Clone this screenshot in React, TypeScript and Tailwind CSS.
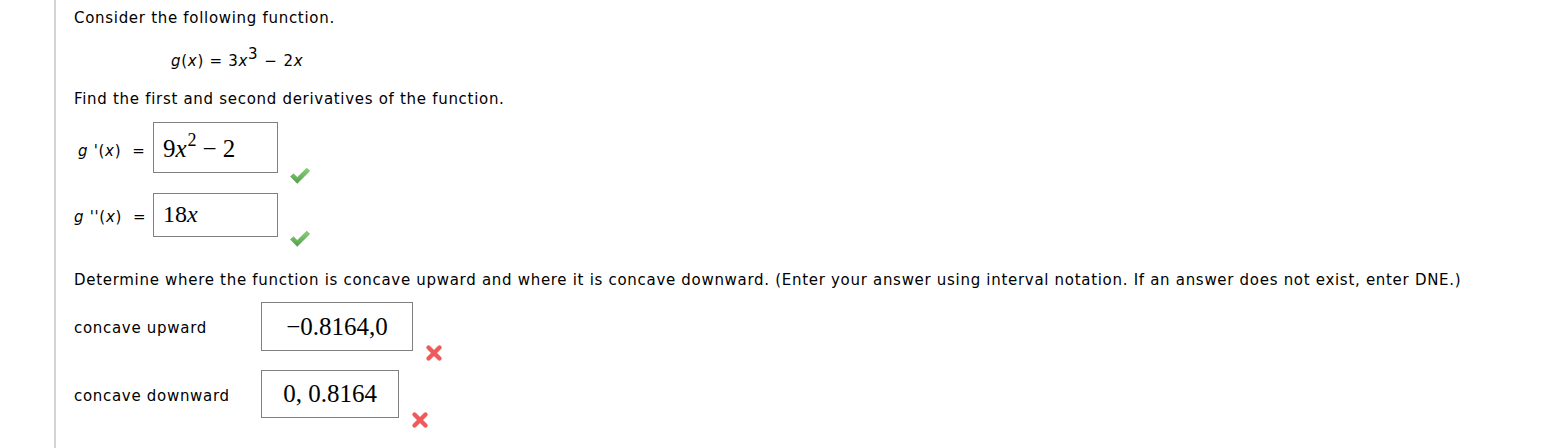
import React from "react";

const sans = { fontFamily: '"DejaVu Sans", Verdana, sans-serif' };
const serif = { fontFamily: '"Liberation Serif", "DejaVu Serif", serif' };

function Check() {
  return (
    <svg width="22" height="18" viewBox="0 0 22 18">
      <defs>
        <linearGradient id="cg" x1="0" y1="0" x2="0" y2="1">
          <stop offset="0" stopColor="#8fd07f" />
          <stop offset="1" stopColor="#4e9f45" />
        </linearGradient>
      </defs>
      <path
        d="M1.5 9.5 L4.5 6.8 L8.2 10.4 L17.8 1.2 L20.6 4 L8.2 16.4 Z"
        fill="url(#cg)"
        stroke="#5aa94f"
        strokeWidth="0.6"
        strokeLinejoin="round"
      />
    </svg>
  );
}

function Cross() {
  return (
    <svg width="18" height="18" viewBox="0 0 18 18">
      <path d="M3.5 3.5 L14.5 14.5 M14.5 3.5 L3.5 14.5" stroke="#ef5b5b" strokeWidth="4.4" strokeLinecap="round" />
    </svg>
  );
}

export default function App() {
  return (
    <div className="w-[1557px] h-[448px] bg-white overflow-hidden text-[15px] tracking-[0.7px] text-black" style={sans}>
      <div className="ml-[54px] h-full border-l-2 border-[#d4d4d4] pl-[18px] pt-[8px]">
        <p className="h-[20px] leading-[20px]">Consider the following function.</p>
        <p className="mt-[23px] ml-[97px] h-[20px] leading-[20px] whitespace-nowrap">
          <i>g</i>(<i>x</i>) = 3<i>x</i>
          <sup className="text-[15px] relative -top-[7px]">3</sup>
          <span className="mx-[6px]">−</span>2<i>x</i>
        </p>
        <p className="mt-[18px] h-[20px] leading-[20px]">Find the first and second derivatives of the function.</p>

        <div className="flex items-start mt-[13px] h-[51px]">
          <div className="w-[79px] pl-[4px] mt-[19px] leading-[20px]">
            <i>g</i> '(<i>x</i>)&nbsp; =
          </div>
          <div className="w-[125px] h-[51px] border border-[#808080] pl-[9px] pt-[12px] text-[25px] leading-[28px] tracking-normal whitespace-nowrap" style={serif}>
            9<i>x</i>
            <sup className="text-[18px] ml-[1px] relative -top-[11px]">2</sup>
            <span className="mx-[6px]">−</span>2
          </div>
          <div className="ml-[11px] mt-[45px]">
            <Check />
          </div>
        </div>

        <div className="flex items-start mt-[20px] h-[44px]">
          <div className="w-[79px] mt-[14px] leading-[20px]">
            <i>g</i> ''(<i>x</i>)&nbsp; =
          </div>
          <div className="w-[125px] h-[44px] border border-[#808080] pl-[9px] pt-[6px] text-[24px] leading-[28px] tracking-normal" style={serif}>
            18<i>x</i>
          </div>
          <div className="ml-[11px] mt-[37px]">
            <Check />
          </div>
        </div>

        <p className="mt-[33px] h-[20px] leading-[20px] whitespace-nowrap">
          Determine where the function is concave upward and where it is concave downward. (Enter your answer using interval notation. If an answer does not exist, enter DNE.)
        </p>

        <div className="flex items-start mt-[12px] h-[49px]">
          <div className="w-[187px] mt-[16px] leading-[20px]">concave upward</div>
          <div className="w-[152px] h-[49px] border border-[#808080] flex items-center justify-center text-[25px] tracking-normal" style={serif}>
            −0.8164,0
          </div>
          <div className="ml-[12px] mt-[42px]">
            <Cross />
          </div>
        </div>

        <div className="flex items-start mt-[19px] h-[48px]">
          <div className="w-[187px] mt-[16px] leading-[20px]">concave downward</div>
          <div className="w-[138px] h-[48px] border border-[#808080] flex items-center justify-center text-[25px] tracking-normal" style={serif}>
            0, 0.8164
          </div>
          <div className="ml-[12px] mt-[41px]">
            <Cross />
          </div>
        </div>
      </div>
    </div>
  );
}
